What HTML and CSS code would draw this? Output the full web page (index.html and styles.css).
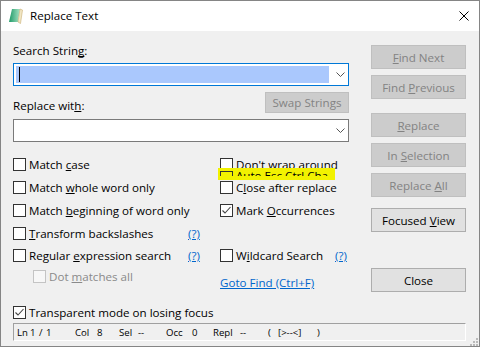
FILE: index.html
```html
<!DOCTYPE html>
<html lang="en">
<head>
<meta charset="UTF-8">
<title>Replace Text</title>
<link rel="stylesheet" href="styles.css">
</head>
<body>
<div class="window">
  <div class="titlebar">
    <svg class="app-icon" width="16" height="16" viewBox="0 0 16 16">
      <defs>
        <linearGradient id="leaf" x1="0" y1="0" x2="1" y2="0">
          <stop offset="0" stop-color="#1f9a68"/>
          <stop offset="1" stop-color="#a6e2c4"/>
        </linearGradient>
      </defs>
      <polygon points="4,1 12,1 10,14 1,14" fill="url(#leaf)"/>
      <polygon points="12,1 14.5,2 12.5,15.5 10,14" fill="#f1e6c4" stroke="#c9ae74" stroke-width="0.6"/>
    </svg>
    <span class="title">Replace Text</span>
    <svg class="close-x" width="10" height="10" viewBox="0 0 10 10">
      <path d="M0.5 0.5 L9.5 9.5 M9.5 0.5 L0.5 9.5" stroke="#000" stroke-width="1"/>
    </svg>
  </div>

  <div class="client">
    <div class="main">
      <div class="left">
        <div class="label">Search Strin<u>g</u>:</div>
        <div class="combo focused">
          <div class="sel"><span class="caret"></span></div>
          <svg class="chevron" width="9" height="5" viewBox="0 0 9 5"><path d="M0.5 0.5 L4.5 4.5 L8.5 0.5" fill="none" stroke="#555" stroke-width="1"/></svg>
        </div>

        <div class="swap-row">
          <span class="label swap-label">Replace wit<u>h</u>:</span>
          <span class="btn disabled swap"><span>Swap Strings</span></span>
        </div>
        <div class="combo">
          <svg class="chevron" width="9" height="5" viewBox="0 0 9 5"><path d="M0.5 0.5 L4.5 4.5 L8.5 0.5" fill="none" stroke="#555" stroke-width="1"/></svg>
        </div>

        <div class="options">
          <div class="check c1"><span class="box"></span><span>Match <u>c</u>ase</span></div>
          <div class="check c3"><span class="box"></span><span>Don't wrap around</span></div>

          <div class="check c1"><span class="box"></span><span>Match <u>w</u>hole word only</span></div>
          <div class="check c3"><span class="box"></span><span>C<u>l</u>ose after replace</span></div>

          <div class="check c1"><span class="box"></span><span>Match <u>b</u>eginning of word only</span></div>
          <div class="check c3"><span class="box"><svg width="11" height="11" viewBox="0 0 11 11"><path d="M1.5 5.5 L4 8 L9.5 2" fill="none" stroke="#444" stroke-width="1.1"/></svg></span><span>Mark <u>O</u>ccurrences</span></div>

          <div class="check c1"><span class="box"></span><span><u>T</u>ransform backslashes</span></div>
          <span class="help c2">(?)</span>

          <div class="check c1"><span class="box"></span><span>Regular <u>e</u>xpression search</span></div>
          <span class="help c2">(?)</span>
          <div class="check c3"><span class="box"></span><span>W<u>i</u>ldcard Search</span></div>
          <span class="help c4">(?)</span>

          <div class="check c1 dot disabled"><span class="box"></span><span>Dot <u>m</u>atches all</span></div>
          <span class="goto">Goto Find (Ctrl+F)</span>

          <div class="autoesc">
            <div class="autoesc-clip"><span class="box"></span><span class="autoesc-text">Auto Esc Ctrl Cha</span></div>
          </div>
        </div>
      </div>

      <div class="buttons">
        <span class="btn disabled"><span><u>F</u>ind Next</span></span>
        <span class="btn disabled gap-6"><span>Find <u>P</u>revious</span></span>
        <span class="btn disabled gap-14"><span><u>R</u>eplace</span></span>
        <span class="btn disabled gap-6"><span>In <u>S</u>election</span></span>
        <span class="btn disabled gap-6"><span>Replace <u>A</u>ll</span></span>
        <span class="btn gap-11"><span>Focused <u>V</u>iew</span></span>
        <span class="btn gap-36"><span>Close</span></span>
      </div>
    </div>

    <div class="check transparent"><span class="box"><svg width="11" height="11" viewBox="0 0 11 11"><path d="M1.5 5.5 L4 8 L9.5 2" fill="none" stroke="#444" stroke-width="1.1"/></svg></span><span>Transparent mode on losing focus</span></div>

    <div class="status">
      <span class="tok w13">Ln</span><span class="tok w45">1 / 1</span>
      <span class="tok w22">Col</span><span class="tok w22">8</span>
      <span class="tok w19">Sel</span><span class="tok w28">--</span>
      <span class="tok w26">Occ</span><span class="tok w21">0</span>
      <span class="tok w27">Repl</span><span class="tok w28">--</span>
      <span class="tok w10">(</span><span class="tok w39">[&gt;--&lt;]</span><span class="tok">)</span>
    </div>
  </div>

  <svg class="grip" width="8" height="8" viewBox="0 0 8 8">
    <rect x="6" y="0" width="2" height="2" fill="#b9b9b9"/>
    <rect x="3" y="3" width="2" height="2" fill="#b9b9b9"/>
    <rect x="6" y="3" width="2" height="2" fill="#b9b9b9"/>
    <rect x="0" y="6" width="2" height="2" fill="#b9b9b9"/>
    <rect x="3" y="6" width="2" height="2" fill="#b9b9b9"/>
    <rect x="6" y="6" width="2" height="2" fill="#b9b9b9"/>
  </svg>
</div>
</body>
</html>
```

FILE: styles.css
```css
* { box-sizing: border-box; }
body {
  margin: 0;
  font-family: "Open Sans", "Noto Sans", sans-serif;
  font-size: 11.6px;
  color: #000;
}
u { text-decoration-skip-ink: none; text-underline-offset: 1px; }

.window {
  width: 480px;
  height: 347px;
  border: 1px solid #858585;
  background: #f0f0f0;
  display: flex;
  flex-direction: column;
  position: relative;
}

/* title bar */
.titlebar {
  height: 30px;
  flex: none;
  background: #fff;
  display: flex;
  align-items: center;
  padding-left: 7px;
}
.app-icon { flex: none; }
.title { margin-left: 6px; line-height: 16px; }
.close-x { margin-left: auto; margin-right: 10px; }

/* client area */
.client { flex: 1; padding: 12px 13px 0 12px; }
.main { display: flex; gap: 22px; }
.left { width: 336px; }
.label { line-height: 16px; height: 16px; white-space: nowrap; }

.combo {
  height: 23px;
  margin-top: 4px;
  border: 1px solid #7a7a7a;
  background: #fff;
  display: flex;
  align-items: center;
}
.combo.focused { border-color: #0078d7; }
.combo .sel {
  margin-left: 2px;
  width: 313px;
  height: 17px;
  background: #aac8fd;
  display: flex;
  align-items: center;
}
.caret { width: 1px; height: 15px; background: #000; margin-left: 3px; }
.chevron { margin-left: auto; margin-right: 3px; }

.swap-row {
  display: flex;
  justify-content: space-between;
  align-items: flex-start;
  height: 21px;
  margin-top: 6px;
}
.swap-label { margin-top: 6px; }
.swap-row + .combo { margin-top: 6px; }

/* buttons */
.btn {
  display: flex;
  align-items: center;
  justify-content: center;
  height: 24px;
  line-height: 13px;
  border: 1px solid #adadad;
  background: #e1e1e1;
  white-space: nowrap;
}
.btn.disabled { background: #cccccc; border-color: #bfbfbf; color: #838383; }
.btn.swap { width: 84px; height: 21px; }

.buttons { width: 95px; padding-top: 2px; display: flex; flex-direction: column; }
.gap-6 { margin-top: 6px; }
.gap-11 { margin-top: 11px; }
.gap-14 { margin-top: 14px; }
.gap-36 { margin-top: 36px; }

/* check boxes */
.options {
  margin-top: 16px;
  display: grid;
  grid-template-columns: 175px 32px 115px 14px;
  grid-template-rows: 23px 23px 23px 22px 21px auto;
  align-items: start;
  position: relative;
}
.check {
  display: flex;
  align-items: center;
  gap: 3px;
  height: 13px;
  line-height: 13px;
  white-space: nowrap;
}
.box {
  flex: none;
  width: 13px;
  height: 13px;
  border: 1px solid #333;
  background: #fff;
  display: flex;
  align-items: center;
  justify-content: center;
}
.c1 { grid-column: 1; }
.c2 { grid-column: 2; }
.c3 { grid-column: 3; }
.c4 { grid-column: 4; }
.dot { margin-left: 20px; }
.check.disabled { color: #8a8a8a; }
.check.disabled .box { border-color: #c4c4c4; background: #f7f7f7; }

.help, .goto {
  color: #0066cc;
  text-decoration: underline;
  line-height: 13px;
  white-space: nowrap;
}
.goto { grid-column: 3 / span 2; margin-top: 6px; }

/* half hidden, highlighted option */
.autoesc {
  position: absolute;
  left: 205px;
  top: 10px;
  width: 117px;
  height: 12px;
  background: #f2f200;
}
.autoesc-clip {
  position: absolute;
  left: 2px;
  top: 3px;
  height: 5px;
  overflow: hidden;
  display: flex;
  gap: 3px;
  white-space: nowrap;
}
.autoesc-clip .box { background: transparent; }
.autoesc-text { line-height: 13px; margin-top: -2px; }

/* bottom */
.transparent { margin-top: 14px; }
.status {
  margin-top: 4px;
  height: 18px;
  border: 1px solid;
  border-color: #a0a0a0 #fff #fff #a0a0a0;
  display: flex;
  align-items: center;
  padding-left: 3px;
  font-size: 9.6px;
  line-height: 13px;
  white-space: pre;
}
.tok { flex: none; }
.w10 { width: 10px; }
.w13 { width: 13px; }
.w19 { width: 19px; }
.w21 { width: 21px; }
.w22 { width: 22px; }
.w26 { width: 26px; }
.w27 { width: 27px; }
.w28 { width: 28px; }
.w39 { width: 39px; }
.w45 { width: 45px; word-spacing: 1px; }

.grip { position: absolute; right: 1px; bottom: 0; }
```
